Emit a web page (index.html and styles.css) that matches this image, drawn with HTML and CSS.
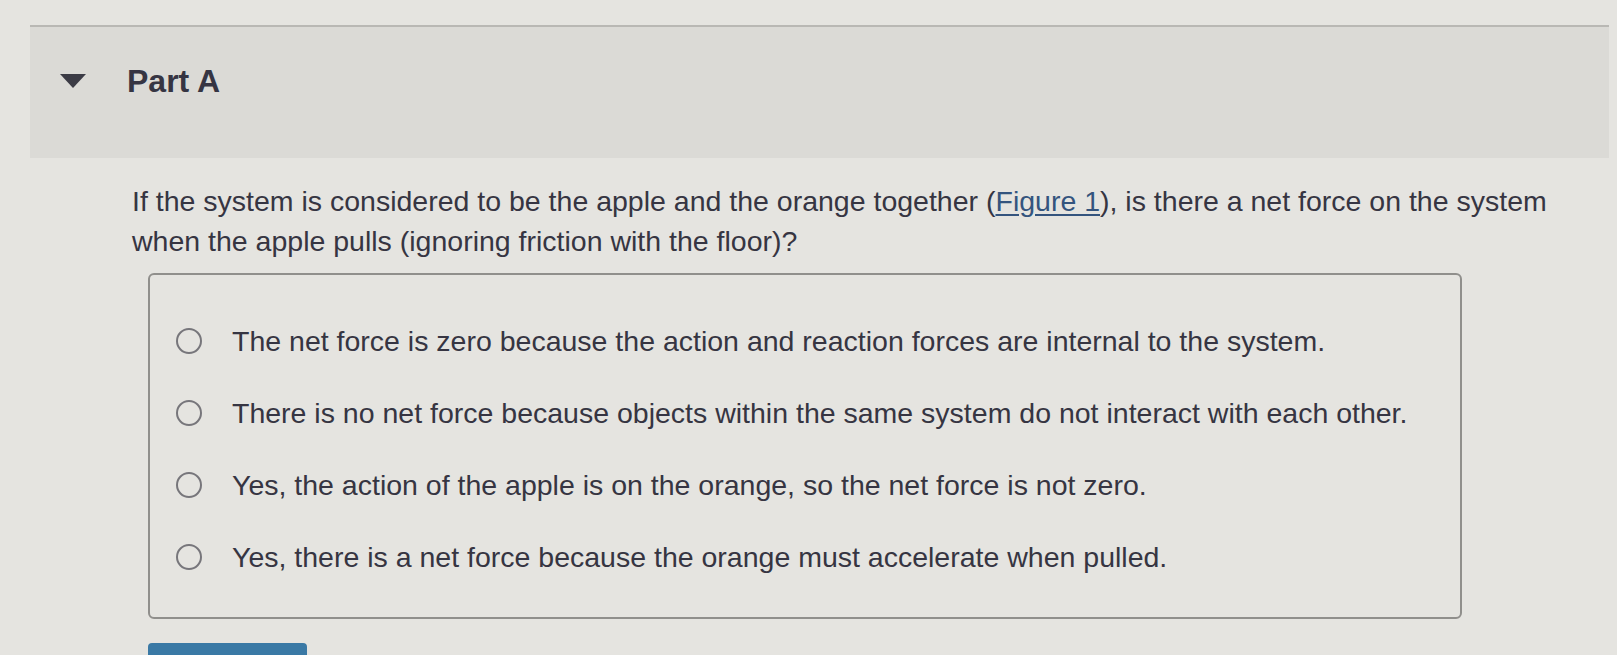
FILE: index.html
```html
<!DOCTYPE html>
<html lang="en">
<head>
    <meta charset="UTF-8">
    <title>Part A</title>
    <link rel="stylesheet" href="styles.css">
</head>
<body>
    <div class="part">
        <!-- part header -->
        <div class="part-header">
            <span class="caret"></span>
            <h2 class="part-title">Part A</h2>
        </div>

        <!-- question body -->
        <div class="part-body">
            <p class="question">If the system is considered to be the apple and the orange together (<a href="#" class="fig-link">Figure 1</a>), is there a net force on the system when the apple pulls (ignoring friction with the floor)?</p>

            <div class="choices">
                <label class="choice"><span class="radio"></span><span class="choice-text">The net force is zero because the action and reaction forces are internal to the system.</span></label>
                <label class="choice"><span class="radio"></span><span class="choice-text">There is no net force because objects within the same system do not interact with each other.</span></label>
                <label class="choice"><span class="radio"></span><span class="choice-text">Yes, the action of the apple is on the orange, so the net force is not zero.</span></label>
                <label class="choice"><span class="radio"></span><span class="choice-text">Yes, there is a net force because the orange must accelerate when pulled.</span></label>
            </div>

            <!-- submit button, only its top edge is in view -->
            <button class="submit" aria-label="Submit"></button>
        </div>
    </div>
</body>
</html>
```

FILE: styles.css
```css
/* reset */
* {
    margin: 0;
    padding: 0;
    box-sizing: border-box;
}

body {
    font-family: "Liberation Sans", Arial, Helvetica, sans-serif;
    background-color: #e5e4e0;
    color: #363542;
    overflow: hidden;
    padding-top: 25px;
}

/* part wrapper */
.part {
    margin-left: 30px;
    margin-right: 8px;
    border-top: 2px solid #b9b8b4;
}

.part-header {
    height: 131px;
    background-color: #dbdad6;
    display: flex;
    align-items: flex-start;
    padding: 34px 0 0 30px;
}

.caret {
    width: 0;
    height: 0;
    border-left: 13px solid transparent;
    border-right: 13px solid transparent;
    border-top: 14px solid #3b3b45;
    margin-top: 13px;
    margin-right: 41px;
}

.part-title {
    font-size: 32px;
    font-weight: bold;
    line-height: 40px;
    color: #363543;
}

/* question */
.part-body {
    padding: 23px 8px 0 102px;
}

.question {
    font-size: 28.5px;
    line-height: 40px;
    margin-bottom: 12px;
}

.fig-link {
    color: #34547e;
    text-decoration: underline;
    text-underline-offset: 3px;
}

/* answer choices */
.choices {
    margin-left: 16px;
    width: 1314px;
    border: 2px solid #908f8c;
    border-radius: 6px;
    padding: 30px 0 24px 26px;
}

.choice {
    height: 72px;
    display: flex;
    align-items: center;
    font-size: 28.5px;
}

.radio {
    width: 26px;
    height: 26px;
    border: 2px solid #77767b;
    border-radius: 50%;
    margin-right: 30px;
    flex-shrink: 0;
}

.submit {
    display: block;
    margin-top: 24px;
    margin-left: 16px;
    width: 159px;
    height: 44px;
    border: none;
    border-radius: 4px;
    background-color: #3a79a5;
}
```
